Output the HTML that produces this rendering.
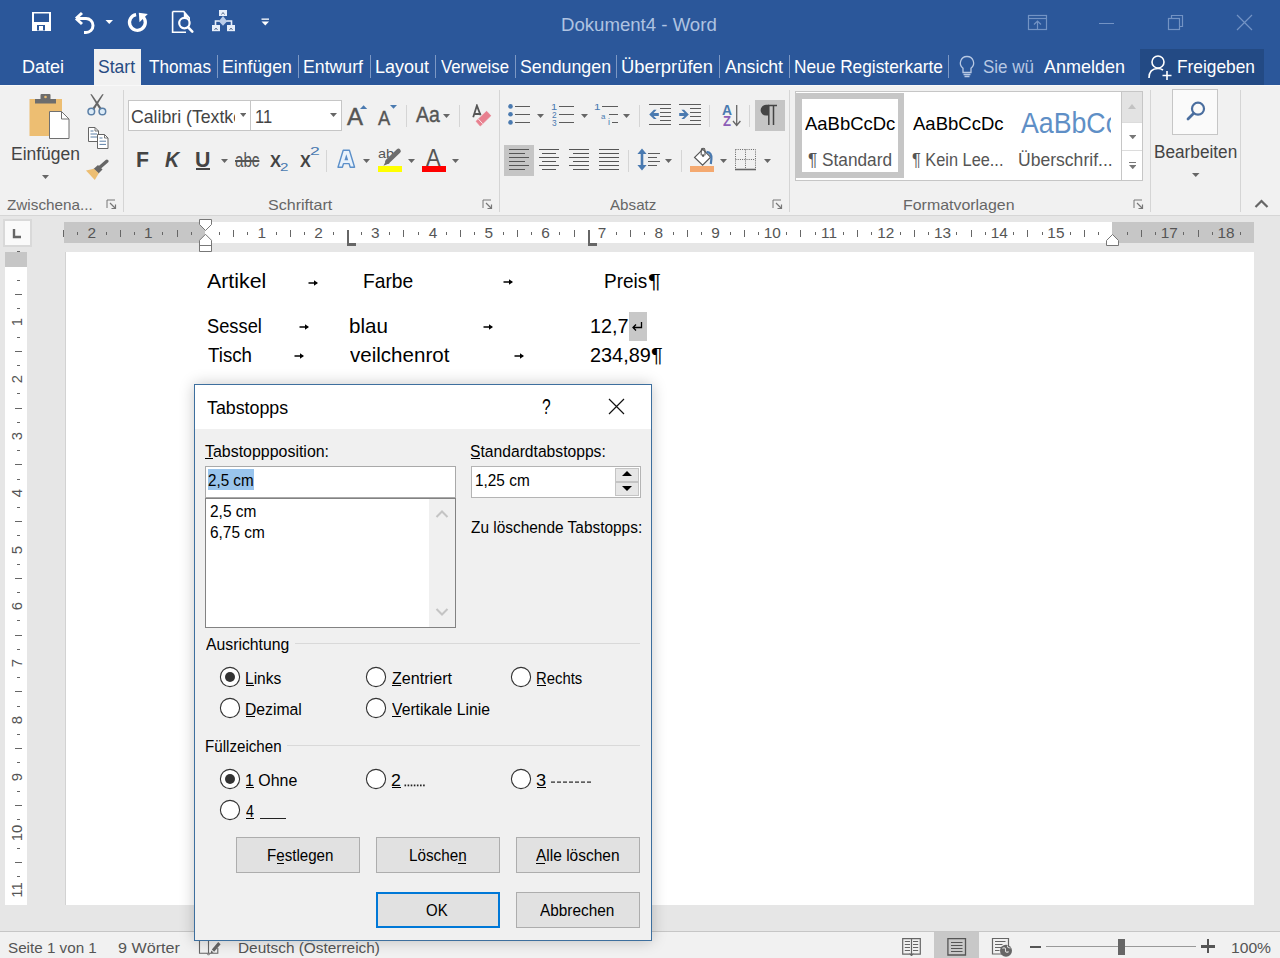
<!DOCTYPE html>
<html><head><meta charset="utf-8"><title>Word</title>
<style>
html,body{margin:0;padding:0;width:1280px;height:958px;overflow:hidden;background:#e6e6e6;}
body{position:relative;font-family:"Liberation Sans",sans-serif;}
.t{position:absolute;white-space:pre;transform-origin:0 0;font-family:"Liberation Sans",sans-serif;}
.r{position:absolute;}
</style></head><body>
<div class="r" style="left:0px;top:0px;width:1280px;height:85px;background:#2b579a;"></div>
<div class="r" style="left:0px;top:85px;width:1280px;height:131px;background:#f1f1f1;"></div>
<div class="r" style="left:0px;top:215px;width:1280px;height:1px;background:#d6d6d6;"></div>
<div class="r" style="left:0px;top:216px;width:1280px;height:715px;background:#e6e6e6;"></div>
<div class="r" style="left:0px;top:931px;width:1280px;height:1px;background:#c6c6c6;"></div>
<div class="r" style="left:0px;top:932px;width:1280px;height:26px;background:#f1f1f1;"></div>
<svg class="r" style="left:30px;top:10px;" width="24" height="24" viewBox="0 0 24 24"><path d="M2 2h19v19H2z" fill="#fff"/><rect x="4" y="3.5" width="15" height="8.5" fill="#2b579a"/><rect x="7" y="15" width="8" height="5.5" fill="#2b579a"/><rect x="9" y="16" width="4" height="4.5" fill="#fff"/></svg>
<svg class="r" style="left:72px;top:10px;" width="26" height="24" viewBox="0 0 26 24"><path d="M4 8.5 L10 3 M4 8.5 L10 14 M4 8.5 H14 A7 7 0 0 1 14 22.5 H12" fill="none" stroke="#fff" stroke-width="3"/></svg>
<svg class="r" style="left:104px;top:18px;" width="10" height="8" viewBox="0 0 10 8"><path d="M1.5 2h7.5l-3.75 4z" fill="#fff"/></svg>
<svg class="r" style="left:126px;top:10px;" width="24" height="24" viewBox="0 0 24 24"><path d="M10.1 4.6 A7.9 7.9 0 1 0 16.8 6.6" fill="none" stroke="#fff" stroke-width="3.3"/><path d="M12.8 2.8 L21.8 4 L13.5 12.2z" fill="#fff"/></svg>
<svg class="r" style="left:170px;top:9px;" width="26" height="26" viewBox="0 0 26 26"><path d="M2.6 2.5h11.2l5.4 6.2v8.5 M16 23.3H2.6V2.5" fill="none" stroke="#fff" stroke-width="1.6"/><path d="M13.8 2.5v6.2h5.4z" fill="#fff"/><circle cx="14.4" cy="14.1" r="5.2" fill="#2b579a" stroke="#fff" stroke-width="2.2"/><path d="M18.2 18.3 L22.3 22.6" stroke="#fff" stroke-width="2.6" stroke-linecap="round"/></svg>
<svg class="r" style="left:210px;top:8px;" width="28" height="26" viewBox="0 0 28 26"><rect x="9" y="2" width="8" height="6" fill="#e6eefa"/><rect x="2" y="17" width="8" height="6.2" fill="#e6eefa"/><rect x="17" y="17" width="8" height="6.2" fill="#e6eefa"/><path d="M13 8 L17.2 13.2 L13 17.8 L8.8 13.2 Z" fill="#b9cbe8"/><path d="M5.5 17 V13 H9.5 M21.5 17 V13 H16.5" stroke="#e6eefa" stroke-width="1.6" fill="none"/><path d="M11.5 6.5 L13 4.5 L14.5 6.5 M4.5 22 L6 20 L7.5 22 M19.5 22 L21 20 L22.5 22" stroke="#5a6f90" stroke-width="1" fill="none"/></svg>
<svg class="r" style="left:260px;top:17px;" width="12" height="10" viewBox="0 0 12 10"><rect x="1.5" y="1.5" width="7.5" height="1.3" fill="#fff"/><path d="M1.5 4.5h7.5l-3.75 4z" fill="#fff"/></svg>
<div class="t" style="left:560.58px;top:14.80px;font-size:19.28px;line-height:19.28px;color:#afc3e1;font-weight:normal;font-style:normal;transform:scaleX(0.9655);">Dokument4 - Word</div>
<svg class="r" style="left:1026px;top:13px;" width="24" height="19" viewBox="0 0 24 19"><rect x="2.5" y="2.5" width="18" height="14" fill="none" stroke="#7393c4" stroke-width="1.2"/><path d="M2.5 5.5h18" stroke="#7393c4" stroke-width="1.2"/><path d="M11.5 16V8 M8 11.5l3.5-3.5l3.5 3.5" fill="none" stroke="#7393c4" stroke-width="1.2"/></svg>
<div class="r" style="left:1099px;top:23px;width:15px;height:1px;background:#7393c4;"></div>
<svg class="r" style="left:1166px;top:13px;" width="20" height="19" viewBox="0 0 20 19"><rect x="2.5" y="5.5" width="11" height="11" fill="none" stroke="#7393c4" stroke-width="1.2"/><path d="M5.5 5.5V2.5h11v11h-3" fill="none" stroke="#7393c4" stroke-width="1.2"/></svg>
<svg class="r" style="left:1235px;top:13px;" width="20" height="19" viewBox="0 0 20 19"><path d="M2 2 L17 17 M17 2 L2 17" stroke="#7393c4" stroke-width="1.2"/></svg>
<div class="r" style="left:94px;top:49px;width:47px;height:36px;background:#f1f1f1;"></div>
<div class="t" style="left:22.45px;top:58.00px;font-size:18.84px;line-height:18.84px;color:#fff;font-weight:normal;font-style:normal;transform:scaleX(0.9575);">Datei</div>
<div class="t" style="left:97.97px;top:58.00px;font-size:18.84px;line-height:18.84px;color:#274b82;font-weight:normal;font-style:normal;transform:scaleX(0.9306);">Start</div>
<div class="t" style="left:148.50px;top:58.00px;font-size:18.84px;line-height:18.84px;color:#fff;font-weight:normal;font-style:normal;transform:scaleX(0.9111);">Thomas</div>
<div class="r" style="left:217px;top:55px;width:1px;height:23px;background:#7d98c4;"></div>
<div class="t" style="left:222.47px;top:58.00px;font-size:18.84px;line-height:18.84px;color:#fff;font-weight:normal;font-style:normal;transform:scaleX(0.9391);">Einfügen</div>
<div class="r" style="left:298px;top:55px;width:1px;height:23px;background:#7d98c4;"></div>
<div class="t" style="left:303.48px;top:58.00px;font-size:18.84px;line-height:18.84px;color:#fff;font-weight:normal;font-style:normal;transform:scaleX(0.9391);">Entwurf</div>
<div class="r" style="left:370px;top:55px;width:1px;height:23px;background:#7d98c4;"></div>
<div class="t" style="left:375.47px;top:58.00px;font-size:18.84px;line-height:18.84px;color:#fff;font-weight:normal;font-style:normal;transform:scaleX(0.9555);">Layout</div>
<div class="r" style="left:435px;top:55px;width:1px;height:23px;background:#7d98c4;"></div>
<div class="t" style="left:441.00px;top:58.00px;font-size:18.84px;line-height:18.84px;color:#fff;font-weight:normal;font-style:normal;transform:scaleX(0.8894);">Verweise</div>
<div class="r" style="left:515px;top:55px;width:1px;height:23px;background:#7d98c4;"></div>
<div class="t" style="left:520.47px;top:58.00px;font-size:18.84px;line-height:18.84px;color:#fff;font-weight:normal;font-style:normal;transform:scaleX(0.9449);">Sendungen</div>
<div class="r" style="left:616px;top:55px;width:1px;height:23px;background:#7d98c4;"></div>
<div class="t" style="left:621.48px;top:58.00px;font-size:18.84px;line-height:18.84px;color:#fff;font-weight:normal;font-style:normal;transform:scaleX(0.9765);">Überprüfen</div>
<div class="r" style="left:719px;top:55px;width:1px;height:23px;background:#7d98c4;"></div>
<div class="t" style="left:725.00px;top:58.00px;font-size:18.84px;line-height:18.84px;color:#fff;font-weight:normal;font-style:normal;transform:scaleX(0.9389);">Ansicht</div>
<div class="r" style="left:789px;top:55px;width:1px;height:23px;background:#7d98c4;"></div>
<div class="t" style="left:794.49px;top:58.00px;font-size:18.84px;line-height:18.84px;color:#fff;font-weight:normal;font-style:normal;transform:scaleX(0.9182);">Neue Registerkarte</div>
<div class="r" style="left:948px;top:55px;width:1px;height:23px;background:#7d98c4;"></div>
<svg class="r" style="left:956px;top:53px;" width="22" height="28" viewBox="0 0 22 28"><path d="M11 3.5 A6.5 6.5 0 0 1 15 15.2 V19.5 H7 V15.2 A6.5 6.5 0 0 1 11 3.5z" fill="none" stroke="#b7c8e3" stroke-width="1.3"/><path d="M7.5 21.5h7M8.5 23.5h5" stroke="#b7c8e3" stroke-width="1.3"/></svg>
<div class="t" style="left:982.97px;top:58.00px;font-size:18.84px;line-height:18.84px;color:#b7c8e3;font-weight:normal;font-style:normal;transform:scaleX(0.9028);">Sie wü</div>
<div class="t" style="left:1044.00px;top:58.00px;font-size:18.84px;line-height:18.84px;color:#fff;font-weight:normal;font-style:normal;transform:scaleX(0.9549);">Anmelden</div>
<div class="r" style="left:1140px;top:49px;width:124px;height:36px;background:#234a84;"></div>
<svg class="r" style="left:1146px;top:52px;" width="30" height="30" viewBox="0 0 30 30"><circle cx="12" cy="10" r="6" fill="none" stroke="#fff" stroke-width="1.6"/><path d="M3 26 C3 19 7 16.5 12 16.5 C14 16.5 15.5 17 17 18" fill="none" stroke="#fff" stroke-width="1.6"/><path d="M21 19v9M16.5 23.5h9" stroke="#fff" stroke-width="1.6"/></svg>
<div class="t" style="left:1177.48px;top:58.00px;font-size:18.84px;line-height:18.84px;color:#fff;font-weight:normal;font-style:normal;transform:scaleX(0.9197);">Freigeben</div>
<div class="r" style="left:0px;top:85px;width:1280px;height:1px;background:#f8f8f8;"></div>
<svg class="r" style="left:28px;top:93px;" width="44" height="48" viewBox="0 0 44 48"><rect x="1.5" y="6" width="32.5" height="37" fill="#edbe72"/><rect x="7" y="6" width="21" height="4.5" fill="#6d6d6d"/><rect x="12.5" y="1" width="10" height="7" rx="1" fill="#6d6d6d"/><circle cx="17.5" cy="4" r="1.3" fill="#edbe72"/><path d="M21.5 18.5h12l7.5 7.5v19.5h-19.5z" fill="#fff" stroke="#707070" stroke-width="1"/><path d="M33.5 18.5v7.5h7.5" fill="none" stroke="#707070" stroke-width="1"/></svg>
<div class="t" style="left:10.88px;top:145.60px;font-size:17.68px;line-height:17.68px;color:#444;font-weight:normal;font-style:normal;transform:scaleX(0.9890);">Einfügen</div>
<svg class="r" style="left:42px;top:175px;" width="7" height="4" viewBox="0 0 7 4"><path d="M0 0h7l-3.5 4z" fill="#666"/></svg>
<div class="t" style="left:6.50px;top:197.70px;font-size:14.78px;line-height:14.78px;color:#666666;font-weight:normal;font-style:normal;transform:scaleX(1.0343);">Zwischena...</div>
<svg class="r" style="left:106px;top:199px;" width="11" height="11" viewBox="0 0 11 11"><path d="M1 9V1h8" fill="none" stroke="#777" stroke-width="1"/><path d="M4 4l5.5 5.5M9.5 5.5v4h-4" fill="none" stroke="#777" stroke-width="1.2"/></svg>
<svg class="r" style="left:86px;top:93px;" width="22" height="24" viewBox="0 0 22 24"><path d="M4.3 1.2 L5.8 1.2 L15.6 15.2 L13.6 16.4 Z" fill="#666"/><path d="M17.7 1.2 L16.2 1.2 L6.4 15.2 L8.4 16.4 Z" fill="#666"/><circle cx="5.3" cy="18.5" r="3.3" fill="#dcebf7" stroke="#5b7fa6" stroke-width="1.5"/><circle cx="16.4" cy="18.5" r="3.3" fill="#dcebf7" stroke="#5b7fa6" stroke-width="1.5"/></svg>
<svg class="r" style="left:87px;top:126px;" width="23" height="24" viewBox="0 0 23 24"><path d="M1.5 1.5H8L11.5 5V15.5H1.5Z" fill="#fff" stroke="#666" stroke-width="1"/><path d="M8 1.5V5H11.5" fill="none" stroke="#666" stroke-width="0.9"/><path d="M3.5 5H6.5M3.5 8H10M3.5 11H10" stroke="#5b7fa6" stroke-width="1"/><path d="M10.5 8.5H17.5L21 12V22.5H10.5Z" fill="#fff" stroke="#666" stroke-width="1"/><path d="M17.5 8.5V12H21" fill="none" stroke="#666" stroke-width="0.9"/><path d="M12.5 12H15.5M12.5 15.2H19M12.5 18.4H19" stroke="#5b7fa6" stroke-width="1"/></svg>
<svg class="r" style="left:84px;top:159px;" width="27" height="24" viewBox="0 0 27 24"><path d="M14.5 9.5 L22.8 2.2" stroke="#666" stroke-width="3.4" stroke-linecap="round"/><path d="M9.5 10 L14 6 L18.5 10.5 L14.5 14.5 Z" fill="#666"/><path d="M2 11.5 L10 9.8 L14.8 14.3 L10.8 21 Z" fill="#edbe72"/></svg>
<div class="r" style="left:123px;top:90px;width:1px;height:122px;background:#d5d5d5;"></div>
<div class="r" style="left:128px;top:100px;width:123px;height:31px;background:#fff;box-sizing:border-box;border:1px solid #c6c6c6;"></div>
<div class="r" style="left:251px;top:100px;width:91px;height:31px;background:#fff;box-sizing:border-box;border:1px solid #c6c6c6;border-left:none;"></div>
<div class="r" style="left:129px;top:101px;width:106px;height:29px;overflow:hidden">
<div class="t" style="left:1.68px;top:7.00px;font-size:18.84px;line-height:18.84px;color:#444;font-weight:normal;font-style:normal;transform:scaleX(0.9390);">Calibri (Textkörper)</div>
</div>
<svg class="r" style="left:239.5px;top:113px;" width="6.5" height="4" viewBox="0 0 6.5 4"><path d="M0 0h6.5l-3.25 4z" fill="#666"/></svg>
<div class="t" style="left:254.89px;top:108.00px;font-size:18.26px;line-height:18.26px;color:#444;font-weight:normal;font-style:normal;transform:scaleX(0.9054);">11</div>
<svg class="r" style="left:330px;top:113px;" width="7" height="4" viewBox="0 0 7 4"><path d="M0 0h7l-3.5 4z" fill="#666"/></svg>
<div class="t" style="left:347.40px;top:105.00px;font-size:24.64px;line-height:24.64px;color:#555;font-weight:normal;font-style:normal;transform:scaleX(0.9746);-webkit-text-stroke:0.45px #555;">A</div>
<svg class="r" style="left:360px;top:105px;" width="8" height="4" viewBox="0 0 8 4"><path d="M0 4h7.2l-3.6-3.8z" fill="#4a7ab0"/></svg>
<div class="t" style="left:377.70px;top:108.00px;font-size:20.29px;line-height:20.29px;color:#555;font-weight:normal;font-style:normal;transform:scaleX(0.9024);-webkit-text-stroke:0.4px #555;">A</div>
<svg class="r" style="left:390px;top:105px;" width="8" height="4" viewBox="0 0 8 4"><path d="M0 0h7l-3.5 3.8z" fill="#4a7ab0"/></svg>
<div class="r" style="left:406px;top:105px;width:1px;height:22px;background:#d5d5d5;"></div>
<div class="t" style="left:415.60px;top:103.80px;font-size:21.16px;line-height:21.16px;color:#555;font-weight:normal;font-style:normal;transform:scaleX(0.9190);-webkit-text-stroke:0.4px #555;">Aa</div>
<svg class="r" style="left:443px;top:114px;" width="7" height="4" viewBox="0 0 7 4"><path d="M0 0h7l-3.5 4z" fill="#666"/></svg>
<div class="r" style="left:459px;top:105px;width:1px;height:22px;background:#d5d5d5;"></div>
<svg class="r" style="left:470px;top:104px;" width="24" height="24" viewBox="0 0 24 24"><path d="M3.2 13.3 L6.9 1.6 L10.6 11.2 M4.5 10 H11" fill="none" stroke="#555" stroke-width="1.8"/><path d="M16.6 7.3 L20.8 11.7 L10.3 22 L6.1 17.3 Z" fill="#e8808f" stroke="#e8808f" stroke-width="0.8" stroke-linejoin="round"/><path d="M8.4 15.1 L12.6 19.7" stroke="#fbe3e7" stroke-width="1"/></svg>
<div class="t" style="left:136.00px;top:149.00px;font-size:22.61px;line-height:22.61px;color:#444;font-weight:bold;font-style:normal;transform:scaleX(0.9382);">F</div>
<div class="t" style="left:165.30px;top:149.00px;font-size:22.61px;line-height:22.61px;color:#444;font-weight:bold;font-style:italic;transform:scaleX(0.8719);">K</div>
<div class="t" style="left:194.67px;top:149.00px;font-size:22.61px;line-height:22.61px;color:#444;font-weight:bold;font-style:normal;transform:scaleX(0.9442);">U</div>
<div class="r" style="left:196px;top:168px;width:13.5px;height:1.5px;background:#444;"></div>
<svg class="r" style="left:221px;top:159px;" width="7" height="4" viewBox="0 0 7 4"><path d="M0 0h7l-3.5 4z" fill="#666"/></svg>
<div class="t" style="left:234.80px;top:149.60px;font-size:20.00px;line-height:20.00px;color:#555;font-weight:normal;font-style:normal;transform:scaleX(0.7569);text-decoration:line-through;">abc</div>
<div class="t" style="left:270.00px;top:154.00px;font-size:16.96px;line-height:16.96px;color:#444;font-weight:bold;font-style:normal;transform:scaleX(0.9726);">X</div>
<div class="t" style="left:280.20px;top:163.00px;font-size:10.14px;line-height:10.14px;color:#4a7ab0;font-weight:normal;font-style:normal;transform:scaleX(1.4981);">2</div>
<div class="t" style="left:299.70px;top:154.00px;font-size:16.96px;line-height:16.96px;color:#444;font-weight:bold;font-style:normal;transform:scaleX(0.9550);">X</div>
<div class="t" style="left:309.60px;top:147.00px;font-size:10.14px;line-height:10.14px;color:#4a7ab0;font-weight:normal;font-style:normal;transform:scaleX(1.7374);">2</div>
<div class="r" style="left:326px;top:150px;width:1px;height:22px;background:#d5d5d5;"></div>
<svg class="r" style="left:336px;top:148px;" width="21" height="22" viewBox="0 0 21 22"><path d="M7.2 2.3 H13.4 L18.6 19.2 H14.2 L13.1 15.6 H7.5 L6.4 19.2 H2 Z" fill="#e9f2fb" stroke="#5b8fc9" stroke-width="1.4" stroke-linejoin="round"/><path d="M8.4 12.3 H12.2 L10.3 6.2 Z" fill="#5a8cc6"/></svg>
<svg class="r" style="left:363px;top:159px;" width="7" height="4" viewBox="0 0 7 4"><path d="M0 0h7l-3.5 4z" fill="#666"/></svg>
<div class="t" style="left:377.68px;top:146.60px;font-size:13.62px;line-height:13.62px;color:#555;font-weight:normal;font-style:normal;transform:scaleX(1.0609);">ab</div>
<svg class="r" style="left:380px;top:147px;" width="24" height="22" viewBox="0 0 24 22"><path d="M7.5 14.5 L18.5 4" stroke="#6d6d6d" stroke-width="4.6" stroke-linecap="round"/><path d="M3.5 18.8 L6.2 13.2 L9.5 16.2 Z" fill="#6d6d6d"/></svg>
<div class="r" style="left:378px;top:166px;width:24px;height:6px;background:#ffff00;"></div>
<svg class="r" style="left:408px;top:159px;" width="7" height="4" viewBox="0 0 7 4"><path d="M0 0h7l-3.5 4z" fill="#666"/></svg>
<div class="t" style="left:426.20px;top:147.30px;font-size:23.62px;line-height:23.62px;color:#555;font-weight:normal;font-style:normal;transform:scaleX(0.9268);">A</div>
<div class="r" style="left:422px;top:166px;width:24px;height:6px;background:#ff0000;"></div>
<svg class="r" style="left:452px;top:159px;" width="7" height="4" viewBox="0 0 7 4"><path d="M0 0h7l-3.5 4z" fill="#666"/></svg>
<div class="t" style="left:267.73px;top:197.70px;font-size:14.78px;line-height:14.78px;color:#666666;font-weight:normal;font-style:normal;transform:scaleX(1.0875);">Schriftart</div>
<svg class="r" style="left:482px;top:199px;" width="11" height="11" viewBox="0 0 11 11"><path d="M1 9V1h8" fill="none" stroke="#777" stroke-width="1"/><path d="M4 4l5.5 5.5M9.5 5.5v4h-4" fill="none" stroke="#777" stroke-width="1.2"/></svg>
<div class="r" style="left:499px;top:90px;width:1px;height:122px;background:#d5d5d5;"></div>
<svg class="r" style="left:507px;top:103px;" width="7" height="7" viewBox="0 0 7 7"><circle cx="3.5" cy="3.4" r="2.3" fill="#4a7ab0"/></svg>
<div class="r" style="left:515px;top:106px;width:15px;height:1px;background:#5c5c5c;"></div>
<svg class="r" style="left:507px;top:111px;" width="7" height="7" viewBox="0 0 7 7"><circle cx="3.5" cy="3.3" r="2.3" fill="#4a7ab0"/></svg>
<div class="r" style="left:515px;top:114px;width:15px;height:1px;background:#5c5c5c;"></div>
<svg class="r" style="left:507px;top:119px;" width="7" height="7" viewBox="0 0 7 7"><circle cx="3.5" cy="3.4" r="2.3" fill="#4a7ab0"/></svg>
<div class="r" style="left:515px;top:122px;width:15px;height:1px;background:#5c5c5c;"></div>
<svg class="r" style="left:537px;top:114px;" width="7" height="4" viewBox="0 0 7 4"><path d="M0 0h7l-3.5 4z" fill="#666"/></svg>
<div class="t" style="left:550.57px;top:102.60px;font-size:8.99px;line-height:8.99px;color:#4a7ab0;font-weight:normal;font-style:normal;transform:scaleX(1.2337);">1</div>
<div class="r" style="left:559px;top:106px;width:15px;height:1px;background:#5c5c5c;"></div>
<div class="t" style="left:552.00px;top:110.50px;font-size:8.99px;line-height:8.99px;color:#4a7ab0;font-weight:normal;font-style:normal;transform:scaleX(0.9253);">2</div>
<div class="r" style="left:559px;top:114px;width:15px;height:1px;background:#5c5c5c;"></div>
<div class="t" style="left:552.00px;top:118.60px;font-size:8.99px;line-height:8.99px;color:#4a7ab0;font-weight:normal;font-style:normal;transform:scaleX(0.9253);">3</div>
<div class="r" style="left:559px;top:122px;width:15px;height:1px;background:#5c5c5c;"></div>
<svg class="r" style="left:581px;top:114px;" width="7" height="4" viewBox="0 0 7 4"><path d="M0 0h7l-3.5 4z" fill="#666"/></svg>
<div class="t" style="left:593.60px;top:102.60px;font-size:8.70px;line-height:8.70px;color:#4a7ab0;font-weight:normal;font-style:normal;transform:scaleX(1.3403);">1</div>
<div class="t" style="left:600.80px;top:114.30px;font-size:6.96px;line-height:6.96px;color:#4a7ab0;font-weight:normal;font-style:normal;transform:scaleX(1.1381);">a</div>
<div class="t" style="left:607.60px;top:118.30px;font-size:8.70px;line-height:8.70px;color:#4a7ab0;font-weight:normal;font-style:normal;transform:scaleX(1.0153);">i</div>
<div class="r" style="left:602px;top:106px;width:16px;height:1px;background:#5c5c5c;"></div>
<div class="r" style="left:608.5px;top:114px;width:9.5px;height:1px;background:#5c5c5c;"></div>
<div class="r" style="left:612px;top:122px;width:6px;height:1px;background:#5c5c5c;"></div>
<svg class="r" style="left:623.2px;top:114px;" width="7" height="4" viewBox="0 0 7 4"><path d="M0 0h7l-3.5 4z" fill="#666"/></svg>
<div class="r" style="left:639px;top:105px;width:1px;height:22px;background:#d5d5d5;"></div>
<div class="r" style="left:648.6px;top:104px;width:22.4px;height:1px;background:#5c5c5c;"></div>
<div class="r" style="left:648.6px;top:124px;width:22.4px;height:1px;background:#5c5c5c;"></div>
<div class="r" style="left:660.1px;top:108px;width:11px;height:1px;background:#5c5c5c;"></div>
<div class="r" style="left:660.1px;top:112px;width:11px;height:1px;background:#5c5c5c;"></div>
<div class="r" style="left:660.1px;top:116px;width:11px;height:1px;background:#5c5c5c;"></div>
<div class="r" style="left:660.1px;top:120px;width:11px;height:1px;background:#5c5c5c;"></div>
<svg class="r" style="left:648.6px;top:109px;" width="11" height="11" viewBox="0 0 11 11"><path d="M0.2 5.4 L4.9 0.7 H7.6 L4.6 3.9 H9.8 V6.9 H4.6 L7.6 10.1 H4.9 Z" fill="#4a7ab0"/></svg>
<div class="r" style="left:678.7px;top:104px;width:22.4px;height:1px;background:#5c5c5c;"></div>
<div class="r" style="left:678.7px;top:124px;width:22.4px;height:1px;background:#5c5c5c;"></div>
<div class="r" style="left:690.2px;top:108px;width:11px;height:1px;background:#5c5c5c;"></div>
<div class="r" style="left:690.2px;top:112px;width:11px;height:1px;background:#5c5c5c;"></div>
<div class="r" style="left:690.2px;top:116px;width:11px;height:1px;background:#5c5c5c;"></div>
<div class="r" style="left:690.2px;top:120px;width:11px;height:1px;background:#5c5c5c;"></div>
<svg class="r" style="left:678.7px;top:109px;" width="11" height="11" viewBox="0 0 11 11"><path d="M9.8 5.4 L5.1 0.7 H2.4 L5.4 3.9 H0.2 V6.9 H5.4 L2.4 10.1 H5.1 Z" fill="#4a7ab0"/></svg>
<div class="r" style="left:709px;top:105px;width:1px;height:22px;background:#d5d5d5;"></div>
<div class="t" style="left:721.80px;top:101.60px;font-size:15.36px;line-height:15.36px;color:#4a7ab0;font-weight:bold;font-style:normal;transform:scaleX(0.9041);">A</div>
<div class="t" style="left:722.50px;top:113.70px;font-size:14.06px;line-height:14.06px;color:#8d5eb7;font-weight:bold;font-style:normal;transform:scaleX(0.9314);">Z</div>
<svg class="r" style="left:731px;top:103px;" width="12" height="24" viewBox="0 0 12 24"><path d="M5.7 2v21 M2 18 L5.7 22.5 L9.4 18" fill="none" stroke="#666" stroke-width="1.3"/></svg>
<div class="r" style="left:749px;top:105px;width:1px;height:22px;background:#d5d5d5;"></div>
<div class="r" style="left:755px;top:100px;width:30px;height:31px;background:#c5c5c5;"></div>
<svg class="r" style="left:758px;top:103px;" width="22" height="24" viewBox="0 0 22 24"><path d="M10 2.5 H19 M10.8 2.5 V22 M15.5 2.5 V22" fill="none" stroke="#444" stroke-width="1.5"/><path d="M10.8 1.8 H8 A5.4 5.4 0 0 0 8 12.6 H10.8 Z" fill="#444"/></svg>
<div class="r" style="left:504px;top:145px;width:30px;height:31px;background:#c5c5c5;"></div>
<div class="r" style="left:509px;top:149px;width:20px;height:1px;background:#555;"></div>
<div class="r" style="left:509px;top:153px;width:16px;height:1px;background:#555;"></div>
<div class="r" style="left:509px;top:157px;width:20px;height:1px;background:#555;"></div>
<div class="r" style="left:509px;top:161px;width:16px;height:1px;background:#555;"></div>
<div class="r" style="left:509px;top:165px;width:20px;height:1px;background:#555;"></div>
<div class="r" style="left:509px;top:169px;width:16px;height:1px;background:#555;"></div>
<div class="r" style="left:539px;top:149px;width:20px;height:1px;background:#555;"></div>
<div class="r" style="left:542px;top:153px;width:14px;height:1px;background:#555;"></div>
<div class="r" style="left:539px;top:157px;width:20px;height:1px;background:#555;"></div>
<div class="r" style="left:542px;top:161px;width:14px;height:1px;background:#555;"></div>
<div class="r" style="left:539px;top:165px;width:20px;height:1px;background:#555;"></div>
<div class="r" style="left:542px;top:169px;width:14px;height:1px;background:#555;"></div>
<div class="r" style="left:569px;top:149px;width:20px;height:1px;background:#555;"></div>
<div class="r" style="left:573px;top:153px;width:16px;height:1px;background:#555;"></div>
<div class="r" style="left:569px;top:157px;width:20px;height:1px;background:#555;"></div>
<div class="r" style="left:573px;top:161px;width:16px;height:1px;background:#555;"></div>
<div class="r" style="left:569px;top:165px;width:20px;height:1px;background:#555;"></div>
<div class="r" style="left:573px;top:169px;width:16px;height:1px;background:#555;"></div>
<div class="r" style="left:599px;top:149px;width:20px;height:1px;background:#555;"></div>
<div class="r" style="left:599px;top:153px;width:20px;height:1px;background:#555;"></div>
<div class="r" style="left:599px;top:157px;width:20px;height:1px;background:#555;"></div>
<div class="r" style="left:599px;top:161px;width:20px;height:1px;background:#555;"></div>
<div class="r" style="left:599px;top:165px;width:20px;height:1px;background:#555;"></div>
<div class="r" style="left:599px;top:169px;width:20px;height:1px;background:#555;"></div>
<div class="r" style="left:628px;top:150px;width:1px;height:22px;background:#d5d5d5;"></div>
<svg class="r" style="left:636px;top:147px;" width="12" height="25" viewBox="0 0 12 25"><path d="M6 1.4 L10.6 7 H1.4 Z M6 23.6 L10.6 18 H1.4 Z" fill="#4a7ab0"/><path d="M6 6v13" stroke="#4a7ab0" stroke-width="2.6"/></svg>
<div class="r" style="left:648px;top:153px;width:12px;height:1px;background:#5c5c5c;"></div>
<div class="r" style="left:648px;top:157px;width:9px;height:1px;background:#5c5c5c;"></div>
<div class="r" style="left:648px;top:161px;width:12px;height:1px;background:#5c5c5c;"></div>
<div class="r" style="left:648px;top:165px;width:9px;height:1px;background:#5c5c5c;"></div>
<svg class="r" style="left:665px;top:159px;" width="7" height="4" viewBox="0 0 7 4"><path d="M0 0h7l-3.5 4z" fill="#666"/></svg>
<div class="r" style="left:681px;top:150px;width:1px;height:22px;background:#d5d5d5;"></div>
<svg class="r" style="left:692px;top:146px;" width="22" height="22" viewBox="0 0 22 22"><path d="M2.6 11.4 L10.8 3.4 L18.6 11.2 L10.6 19.2 Z" fill="#fff" stroke="#555" stroke-width="1.2"/><path d="M9.2 9.2 V4.2 A1.9 1.9 0 0 1 13 4.2 V9.2" fill="none" stroke="#555" stroke-width="1.1"/><circle cx="11.1" cy="9.6" r="1.3" fill="#555"/><path d="M14.5 5.8 C17.5 6.2 19.8 8.6 19.4 13 L18.8 18" fill="none" stroke="#4a7ab0" stroke-width="2.2"/></svg>
<div class="r" style="left:690px;top:166px;width:24px;height:6px;background:#f4a970;"></div>
<svg class="r" style="left:720px;top:159px;" width="7" height="4" viewBox="0 0 7 4"><path d="M0 0h7l-3.5 4z" fill="#666"/></svg>
<svg class="r" style="left:734px;top:148px;" width="24" height="23" viewBox="0 0 24 23"><path d="M1.5 1.5H21.5V21.5 M1.5 1.5V21.5 M11.5 1.5V21.5 M1.5 11.5H21.5" fill="none" stroke="#666" stroke-width="1" stroke-dasharray="1 1.2"/><path d="M1 21.5h21" stroke="#666" stroke-width="1.6"/></svg>
<svg class="r" style="left:764px;top:159px;" width="7" height="4" viewBox="0 0 7 4"><path d="M0 0h7l-3.5 4z" fill="#666"/></svg>
<div class="t" style="left:610.30px;top:197.70px;font-size:14.78px;line-height:14.78px;color:#666666;font-weight:normal;font-style:normal;transform:scaleX(1.0268);">Absatz</div>
<svg class="r" style="left:772px;top:199px;" width="11" height="11" viewBox="0 0 11 11"><path d="M1 9V1h8" fill="none" stroke="#777" stroke-width="1"/><path d="M4 4l5.5 5.5M9.5 5.5v4h-4" fill="none" stroke="#777" stroke-width="1.2"/></svg>
<div class="r" style="left:789px;top:90px;width:1px;height:122px;background:#d5d5d5;"></div>
<div class="r" style="left:795px;top:91px;width:348px;height:90px;background:#fff;box-sizing:border-box;border:1px solid #c6c6c6;"></div>
<div class="r" style="left:796px;top:93px;width:108px;height:85px;background:#c6c6c6;"></div>
<div class="r" style="left:802px;top:99px;width:96px;height:73px;background:#fff;"></div>
<div class="t" style="left:805.00px;top:113.50px;font-size:19.28px;line-height:19.28px;color:#000;font-weight:normal;font-style:normal;transform:scaleX(0.9589);">AaBbCcDc</div>
<div class="t" style="left:807.98px;top:150.70px;font-size:18.70px;line-height:18.70px;color:#555;font-weight:normal;font-style:normal;transform:scaleX(0.9224);">¶ Standard</div>
<div class="t" style="left:912.70px;top:113.50px;font-size:19.28px;line-height:19.28px;color:#000;font-weight:normal;font-style:normal;transform:scaleX(0.9610);">AaBbCcDc</div>
<div class="t" style="left:912.27px;top:150.70px;font-size:18.70px;line-height:18.70px;color:#555;font-weight:normal;font-style:normal;transform:scaleX(0.8742);">¶ Kein Lee...</div>
<div class="r" style="left:1015px;top:100px;width:96px;height:40px;overflow:hidden">
<div class="t" style="left:6.00px;top:8.50px;font-size:28.99px;line-height:28.99px;color:#5f8fc6;font-weight:normal;font-style:normal;transform:scaleX(0.9218);">AaBbCc</div>
</div>
<div class="t" style="left:1018.47px;top:150.70px;font-size:18.70px;line-height:18.70px;color:#555;font-weight:normal;font-style:normal;transform:scaleX(0.9396);">Überschrif...</div>
<div class="r" style="left:1121px;top:91px;width:1px;height:90px;background:#c6c6c6;"></div>
<div class="r" style="left:1122px;top:92px;width:20px;height:30px;background:#e3e3e3;"></div>
<div class="r" style="left:1122px;top:122px;width:20px;height:1px;background:#dcdcdc;"></div>
<div class="r" style="left:1122px;top:150px;width:20px;height:1px;background:#dcdcdc;"></div>
<svg class="r" style="left:1128px;top:104px;" width="9" height="6" viewBox="0 0 9 6"><path d="M0 5h8l-4-5z" fill="#c2c2c2"/></svg>
<svg class="r" style="left:1128.5px;top:134.5px;" width="7.5" height="4.2" viewBox="0 0 7.5 4.2"><path d="M0 0h7.5l-3.75 4.2z" fill="#777"/></svg>
<div class="r" style="left:1128.5px;top:161.5px;width:7.5px;height:1.2px;background:#777;"></div>
<svg class="r" style="left:1128.5px;top:165px;" width="7.5" height="4.2" viewBox="0 0 7.5 4.2"><path d="M0 0h7.5l-3.75 4.2z" fill="#777"/></svg>
<div class="t" style="left:902.98px;top:197.70px;font-size:14.78px;line-height:14.78px;color:#666666;font-weight:normal;font-style:normal;transform:scaleX(1.0785);">Formatvorlagen</div>
<svg class="r" style="left:1133px;top:199px;" width="11" height="11" viewBox="0 0 11 11"><path d="M1 9V1h8" fill="none" stroke="#777" stroke-width="1"/><path d="M4 4l5.5 5.5M9.5 5.5v4h-4" fill="none" stroke="#777" stroke-width="1.2"/></svg>
<div class="r" style="left:1150px;top:90px;width:1px;height:122px;background:#d5d5d5;"></div>
<div class="r" style="left:1172px;top:89px;width:46px;height:46px;background:#fafafa;box-sizing:border-box;border:1px solid #c6c6c6;"></div>
<svg class="r" style="left:1184px;top:99px;" width="24" height="24" viewBox="0 0 24 24"><circle cx="14" cy="9.7" r="6" fill="none" stroke="#4a6e9f" stroke-width="2.2"/><path d="M9.5 14.5 L4 20" stroke="#4a6e9f" stroke-width="2.8" stroke-linecap="round"/></svg>
<div class="t" style="left:1153.98px;top:143.00px;font-size:18.70px;line-height:18.70px;color:#444;font-weight:normal;font-style:normal;transform:scaleX(0.9204);">Bearbeiten</div>
<svg class="r" style="left:1192px;top:173px;" width="7.5" height="4" viewBox="0 0 7.5 4"><path d="M0 0h7.5l-3.75 4z" fill="#666"/></svg>
<div class="r" style="left:1240px;top:90px;width:1px;height:122px;background:#d5d5d5;"></div>
<svg class="r" style="left:1253px;top:197px;" width="17" height="13" viewBox="0 0 17 13"><path d="M2.5 10 L8.5 4 L14.5 10" fill="none" stroke="#666" stroke-width="2.2"/></svg>
<div class="r" style="left:3px;top:219px;width:29px;height:28px;background:#d9d9d9;"></div>
<div class="r" style="left:5px;top:221px;width:25px;height:24px;background:#fafafa;"></div>
<svg class="r" style="left:10px;top:226px;" width="14" height="14" viewBox="0 0 14 14"><path d="M4 3v8h7" fill="none" stroke="#666" stroke-width="2.4"/></svg>
<div class="r" style="left:64px;top:222px;width:1190px;height:21px;background:#c6c6c6;"></div>
<div class="r" style="left:205px;top:222px;width:907px;height:21px;background:#fff;"></div>
<div class="r" style="left:63px;top:230px;width:1px;height:7px;background:#666;"></div>
<div class="r" style="left:77px;top:232px;width:1px;height:3px;background:#666;"></div>
<div class="t" style="left:87.39px;top:225.40px;font-size:15.36px;line-height:15.36px;color:#555;font-weight:normal;font-style:normal;">2</div>
<div class="r" style="left:106px;top:232px;width:1px;height:3px;background:#666;"></div>
<div class="r" style="left:120px;top:230px;width:1px;height:7px;background:#666;"></div>
<div class="r" style="left:134px;top:232px;width:1px;height:3px;background:#666;"></div>
<div class="t" style="left:144.11px;top:225.40px;font-size:15.36px;line-height:15.36px;color:#555;font-weight:normal;font-style:normal;">1</div>
<div class="r" style="left:162px;top:232px;width:1px;height:3px;background:#666;"></div>
<div class="r" style="left:177px;top:230px;width:1px;height:7px;background:#666;"></div>
<div class="r" style="left:191px;top:232px;width:1px;height:3px;background:#666;"></div>
<div class="r" style="left:219px;top:232px;width:1px;height:3px;background:#666;"></div>
<div class="r" style="left:233px;top:230px;width:1px;height:7px;background:#666;"></div>
<div class="r" style="left:247px;top:232px;width:1px;height:3px;background:#666;"></div>
<div class="t" style="left:257.55px;top:225.40px;font-size:15.36px;line-height:15.36px;color:#555;font-weight:normal;font-style:normal;">1</div>
<div class="r" style="left:276px;top:232px;width:1px;height:3px;background:#666;"></div>
<div class="r" style="left:290px;top:230px;width:1px;height:7px;background:#666;"></div>
<div class="r" style="left:304px;top:232px;width:1px;height:3px;background:#666;"></div>
<div class="t" style="left:314.27px;top:225.40px;font-size:15.36px;line-height:15.36px;color:#555;font-weight:normal;font-style:normal;">2</div>
<div class="r" style="left:333px;top:232px;width:1px;height:3px;background:#666;"></div>
<div class="r" style="left:347px;top:230px;width:1px;height:7px;background:#666;"></div>
<div class="r" style="left:361px;top:232px;width:1px;height:3px;background:#666;"></div>
<div class="t" style="left:370.99px;top:225.40px;font-size:15.36px;line-height:15.36px;color:#555;font-weight:normal;font-style:normal;">3</div>
<div class="r" style="left:389px;top:232px;width:1px;height:3px;background:#666;"></div>
<div class="r" style="left:403px;top:230px;width:1px;height:7px;background:#666;"></div>
<div class="r" style="left:418px;top:232px;width:1px;height:3px;background:#666;"></div>
<div class="t" style="left:428.71px;top:225.40px;font-size:15.36px;line-height:15.36px;color:#555;font-weight:normal;font-style:normal;">4</div>
<div class="r" style="left:446px;top:232px;width:1px;height:3px;background:#666;"></div>
<div class="r" style="left:460px;top:230px;width:1px;height:7px;background:#666;"></div>
<div class="r" style="left:474px;top:232px;width:1px;height:3px;background:#666;"></div>
<div class="t" style="left:484.43px;top:225.40px;font-size:15.36px;line-height:15.36px;color:#555;font-weight:normal;font-style:normal;">5</div>
<div class="r" style="left:503px;top:232px;width:1px;height:3px;background:#666;"></div>
<div class="r" style="left:517px;top:230px;width:1px;height:7px;background:#666;"></div>
<div class="r" style="left:531px;top:232px;width:1px;height:3px;background:#666;"></div>
<div class="t" style="left:541.15px;top:225.40px;font-size:15.36px;line-height:15.36px;color:#555;font-weight:normal;font-style:normal;">6</div>
<div class="r" style="left:559px;top:232px;width:1px;height:3px;background:#666;"></div>
<div class="r" style="left:574px;top:230px;width:1px;height:7px;background:#666;"></div>
<div class="r" style="left:588px;top:232px;width:1px;height:3px;background:#666;"></div>
<div class="t" style="left:597.87px;top:225.40px;font-size:15.36px;line-height:15.36px;color:#555;font-weight:normal;font-style:normal;">7</div>
<div class="r" style="left:616px;top:232px;width:1px;height:3px;background:#666;"></div>
<div class="r" style="left:630px;top:230px;width:1px;height:7px;background:#666;"></div>
<div class="r" style="left:644px;top:232px;width:1px;height:3px;background:#666;"></div>
<div class="t" style="left:654.59px;top:225.40px;font-size:15.36px;line-height:15.36px;color:#555;font-weight:normal;font-style:normal;">8</div>
<div class="r" style="left:673px;top:232px;width:1px;height:3px;background:#666;"></div>
<div class="r" style="left:687px;top:230px;width:1px;height:7px;background:#666;"></div>
<div class="r" style="left:701px;top:232px;width:1px;height:3px;background:#666;"></div>
<div class="t" style="left:711.31px;top:225.40px;font-size:15.36px;line-height:15.36px;color:#555;font-weight:normal;font-style:normal;">9</div>
<div class="r" style="left:730px;top:232px;width:1px;height:3px;background:#666;"></div>
<div class="r" style="left:744px;top:230px;width:1px;height:7px;background:#666;"></div>
<div class="r" style="left:758px;top:232px;width:1px;height:3px;background:#666;"></div>
<div class="t" style="left:763.76px;top:225.40px;font-size:15.36px;line-height:15.36px;color:#555;font-weight:normal;font-style:normal;">10</div>
<div class="r" style="left:786px;top:232px;width:1px;height:3px;background:#666;"></div>
<div class="r" style="left:800px;top:230px;width:1px;height:7px;background:#666;"></div>
<div class="r" style="left:815px;top:232px;width:1px;height:3px;background:#666;"></div>
<div class="t" style="left:821.05px;top:225.40px;font-size:15.36px;line-height:15.36px;color:#555;font-weight:normal;font-style:normal;">11</div>
<div class="r" style="left:843px;top:232px;width:1px;height:3px;background:#666;"></div>
<div class="r" style="left:857px;top:230px;width:1px;height:7px;background:#666;"></div>
<div class="r" style="left:871px;top:232px;width:1px;height:3px;background:#666;"></div>
<div class="t" style="left:877.20px;top:225.40px;font-size:15.36px;line-height:15.36px;color:#555;font-weight:normal;font-style:normal;">12</div>
<div class="r" style="left:900px;top:232px;width:1px;height:3px;background:#666;"></div>
<div class="r" style="left:914px;top:230px;width:1px;height:7px;background:#666;"></div>
<div class="r" style="left:928px;top:232px;width:1px;height:3px;background:#666;"></div>
<div class="t" style="left:933.92px;top:225.40px;font-size:15.36px;line-height:15.36px;color:#555;font-weight:normal;font-style:normal;">13</div>
<div class="r" style="left:956px;top:232px;width:1px;height:3px;background:#666;"></div>
<div class="r" style="left:971px;top:230px;width:1px;height:7px;background:#666;"></div>
<div class="r" style="left:985px;top:232px;width:1px;height:3px;background:#666;"></div>
<div class="t" style="left:990.64px;top:225.40px;font-size:15.36px;line-height:15.36px;color:#555;font-weight:normal;font-style:normal;">14</div>
<div class="r" style="left:1013px;top:232px;width:1px;height:3px;background:#666;"></div>
<div class="r" style="left:1027px;top:230px;width:1px;height:7px;background:#666;"></div>
<div class="r" style="left:1042px;top:232px;width:1px;height:3px;background:#666;"></div>
<div class="t" style="left:1047.36px;top:225.40px;font-size:15.36px;line-height:15.36px;color:#555;font-weight:normal;font-style:normal;">15</div>
<div class="r" style="left:1070px;top:232px;width:1px;height:3px;background:#666;"></div>
<div class="r" style="left:1084px;top:230px;width:1px;height:7px;background:#666;"></div>
<div class="r" style="left:1098px;top:232px;width:1px;height:3px;background:#666;"></div>
<div class="r" style="left:1127px;top:232px;width:1px;height:3px;background:#666;"></div>
<div class="r" style="left:1141px;top:230px;width:1px;height:7px;background:#666;"></div>
<div class="r" style="left:1155px;top:232px;width:1px;height:3px;background:#666;"></div>
<div class="t" style="left:1160.80px;top:225.40px;font-size:15.36px;line-height:15.36px;color:#555;font-weight:normal;font-style:normal;">17</div>
<div class="r" style="left:1183px;top:232px;width:1px;height:3px;background:#666;"></div>
<div class="r" style="left:1198px;top:230px;width:1px;height:7px;background:#666;"></div>
<div class="r" style="left:1212px;top:232px;width:1px;height:3px;background:#666;"></div>
<div class="t" style="left:1217.52px;top:225.40px;font-size:15.36px;line-height:15.36px;color:#555;font-weight:normal;font-style:normal;">18</div>
<div class="r" style="left:1240px;top:232px;width:1px;height:3px;background:#666;"></div>
<div class="r" style="left:346.5px;top:230px;width:2px;height:15px;background:#666;"></div>
<div class="r" style="left:346.5px;top:243px;width:9px;height:2.5px;background:#666;"></div>
<div class="r" style="left:587.5px;top:230px;width:2px;height:15px;background:#666;"></div>
<div class="r" style="left:587.5px;top:243px;width:9px;height:2.5px;background:#666;"></div>
<svg class="r" style="left:198px;top:218px;" width="15" height="35" viewBox="0 0 15 35"><path d="M1.5 1.5H13.5V6.5L7.5 12.5L1.5 6.5Z" fill="#fff" stroke="#777" stroke-width="1"/><path d="M7.5 16.3L13.5 22.3V33.5H1.5V22.3Z" fill="#fff" stroke="#777" stroke-width="1"/><path d="M1.5 27.5H13.5" stroke="#777" stroke-width="1"/></svg>
<svg class="r" style="left:1105px;top:233px;" width="15" height="14" viewBox="0 0 15 14"><path d="M1.5 12.5v-5l6-6l6 6v5z" fill="#fff" stroke="#777" stroke-width="1"/></svg>
<div class="r" style="left:5px;top:252px;width:22px;height:653px;background:#fff;"></div>
<div class="r" style="left:5px;top:252px;width:22px;height:15px;background:#c6c6c6;"></div>
<div class="r" style="left:17px;top:251px;width:3px;height:1px;background:#666;"></div>
<div class="r" style="left:17px;top:280px;width:3px;height:1px;background:#666;"></div>
<div class="r" style="left:14.5px;top:294px;width:7px;height:1px;background:#666;"></div>
<div class="r" style="left:17px;top:308px;width:3px;height:1px;background:#666;"></div>
<div class="t" style="left:-3px;top:302.4px;width:40px;height:40px;transform-origin:50% 50%;transform:rotate(-90deg);text-align:center;font-size:14.9px;line-height:40px;color:#555">1</div>
<div class="r" style="left:17px;top:337px;width:3px;height:1px;background:#666;"></div>
<div class="r" style="left:14.5px;top:351px;width:7px;height:1px;background:#666;"></div>
<div class="r" style="left:17px;top:365px;width:3px;height:1px;background:#666;"></div>
<div class="t" style="left:-3px;top:359.2px;width:40px;height:40px;transform-origin:50% 50%;transform:rotate(-90deg);text-align:center;font-size:14.9px;line-height:40px;color:#555">2</div>
<div class="r" style="left:17px;top:393px;width:3px;height:1px;background:#666;"></div>
<div class="r" style="left:14.5px;top:408px;width:7px;height:1px;background:#666;"></div>
<div class="r" style="left:17px;top:422px;width:3px;height:1px;background:#666;"></div>
<div class="t" style="left:-3px;top:415.9px;width:40px;height:40px;transform-origin:50% 50%;transform:rotate(-90deg);text-align:center;font-size:14.9px;line-height:40px;color:#555">3</div>
<div class="r" style="left:17px;top:450px;width:3px;height:1px;background:#666;"></div>
<div class="r" style="left:14.5px;top:464px;width:7px;height:1px;background:#666;"></div>
<div class="r" style="left:17px;top:479px;width:3px;height:1px;background:#666;"></div>
<div class="t" style="left:-3px;top:472.7px;width:40px;height:40px;transform-origin:50% 50%;transform:rotate(-90deg);text-align:center;font-size:14.9px;line-height:40px;color:#555">4</div>
<div class="r" style="left:17px;top:507px;width:3px;height:1px;background:#666;"></div>
<div class="r" style="left:14.5px;top:521px;width:7px;height:1px;background:#666;"></div>
<div class="r" style="left:17px;top:535px;width:3px;height:1px;background:#666;"></div>
<div class="t" style="left:-3px;top:529.5px;width:40px;height:40px;transform-origin:50% 50%;transform:rotate(-90deg);text-align:center;font-size:14.9px;line-height:40px;color:#555">5</div>
<div class="r" style="left:17px;top:564px;width:3px;height:1px;background:#666;"></div>
<div class="r" style="left:14.5px;top:578px;width:7px;height:1px;background:#666;"></div>
<div class="r" style="left:17px;top:592px;width:3px;height:1px;background:#666;"></div>
<div class="t" style="left:-3px;top:586.3px;width:40px;height:40px;transform-origin:50% 50%;transform:rotate(-90deg);text-align:center;font-size:14.9px;line-height:40px;color:#555">6</div>
<div class="r" style="left:17px;top:620px;width:3px;height:1px;background:#666;"></div>
<div class="r" style="left:14.5px;top:635px;width:7px;height:1px;background:#666;"></div>
<div class="r" style="left:17px;top:649px;width:3px;height:1px;background:#666;"></div>
<div class="t" style="left:-3px;top:643.1px;width:40px;height:40px;transform-origin:50% 50%;transform:rotate(-90deg);text-align:center;font-size:14.9px;line-height:40px;color:#555">7</div>
<div class="r" style="left:17px;top:677px;width:3px;height:1px;background:#666;"></div>
<div class="r" style="left:14.5px;top:691px;width:7px;height:1px;background:#666;"></div>
<div class="r" style="left:17px;top:706px;width:3px;height:1px;background:#666;"></div>
<div class="t" style="left:-3px;top:699.8px;width:40px;height:40px;transform-origin:50% 50%;transform:rotate(-90deg);text-align:center;font-size:14.9px;line-height:40px;color:#555">8</div>
<div class="r" style="left:17px;top:734px;width:3px;height:1px;background:#666;"></div>
<div class="r" style="left:14.5px;top:748px;width:7px;height:1px;background:#666;"></div>
<div class="r" style="left:17px;top:762px;width:3px;height:1px;background:#666;"></div>
<div class="t" style="left:-3px;top:756.6px;width:40px;height:40px;transform-origin:50% 50%;transform:rotate(-90deg);text-align:center;font-size:14.9px;line-height:40px;color:#555">9</div>
<div class="r" style="left:17px;top:791px;width:3px;height:1px;background:#666;"></div>
<div class="r" style="left:14.5px;top:805px;width:7px;height:1px;background:#666;"></div>
<div class="r" style="left:17px;top:819px;width:3px;height:1px;background:#666;"></div>
<div class="t" style="left:-3px;top:813.4px;width:40px;height:40px;transform-origin:50% 50%;transform:rotate(-90deg);text-align:center;font-size:14.9px;line-height:40px;color:#555">10</div>
<div class="r" style="left:17px;top:848px;width:3px;height:1px;background:#666;"></div>
<div class="r" style="left:14.5px;top:862px;width:7px;height:1px;background:#666;"></div>
<div class="r" style="left:17px;top:876px;width:3px;height:1px;background:#666;"></div>
<div class="t" style="left:-3px;top:870.2px;width:40px;height:40px;transform-origin:50% 50%;transform:rotate(-90deg);text-align:center;font-size:14.9px;line-height:40px;color:#555">11</div>
<div class="r" style="left:65px;top:252px;width:1px;height:653px;background:#d2d2d2;"></div>
<div class="r" style="left:66px;top:252px;width:1188px;height:653px;background:#fff;"></div>
<div class="t" style="left:207.20px;top:271.10px;font-size:20.29px;line-height:20.29px;color:#000;font-weight:normal;font-style:normal;transform:scaleX(1.0511);">Artikel</div>
<div class="t" style="left:363.37px;top:271.10px;font-size:20.29px;line-height:20.29px;color:#000;font-weight:normal;font-style:normal;transform:scaleX(0.9482);">Farbe</div>
<div class="t" style="left:604.37px;top:271.10px;font-size:20.29px;line-height:20.29px;color:#000;font-weight:normal;font-style:normal;transform:scaleX(0.9353);">Preis</div>
<div class="t" style="left:647.80px;top:271.10px;font-size:20.29px;line-height:20.29px;color:#000;font-weight:normal;font-style:normal;transform:scaleX(1.1895);">¶</div>
<div class="t" style="left:206.76px;top:315.80px;font-size:20.29px;line-height:20.29px;color:#000;font-weight:normal;font-style:normal;transform:scaleX(0.9011);">Sessel</div>
<div class="t" style="left:348.75px;top:315.80px;font-size:20.29px;line-height:20.29px;color:#000;font-weight:normal;font-style:normal;transform:scaleX(1.0139);">blau</div>
<div class="t" style="left:590.04px;top:315.80px;font-size:20.29px;line-height:20.29px;color:#000;font-weight:normal;font-style:normal;transform:scaleX(0.9761);">12,7</div>
<div class="r" style="left:629px;top:312px;width:18px;height:29px;background:#c8c8c8;"></div>
<svg class="r" style="left:631px;top:321px;" width="13" height="11" viewBox="0 0 13 11"><path d="M10.5 1v5.5H2.5 M5 3.5L2 6.5L5 9.5" fill="none" stroke="#000" stroke-width="1.3"/></svg>
<div class="t" style="left:207.80px;top:344.90px;font-size:20.29px;line-height:20.29px;color:#000;font-weight:normal;font-style:normal;transform:scaleX(0.9221);">Tisch</div>
<div class="t" style="left:349.80px;top:344.90px;font-size:20.29px;line-height:20.29px;color:#000;font-weight:normal;font-style:normal;transform:scaleX(1.0130);">veilchenrot</div>
<div class="t" style="left:590.08px;top:344.90px;font-size:20.29px;line-height:20.29px;color:#000;font-weight:normal;font-style:normal;transform:scaleX(0.9801);">234,89</div>
<div class="t" style="left:650.86px;top:344.90px;font-size:20.29px;line-height:20.29px;color:#000;font-weight:normal;font-style:normal;transform:scaleX(1.0819);">¶</div>
<svg class="r" style="left:308px;top:278.5px;" width="11" height="8" viewBox="0 0 11 8"><path d="M0.5 4h8" stroke="#000" stroke-width="1.5"/><path d="M6 1.2 L10 4 L6 6.8z" fill="#000"/></svg>
<svg class="r" style="left:503.3px;top:278.4px;" width="11" height="8" viewBox="0 0 11 8"><path d="M0.5 4h8" stroke="#000" stroke-width="1.5"/><path d="M6 1.2 L10 4 L6 6.8z" fill="#000"/></svg>
<svg class="r" style="left:299px;top:323.2px;" width="11" height="8" viewBox="0 0 11 8"><path d="M0.5 4h8" stroke="#000" stroke-width="1.5"/><path d="M6 1.2 L10 4 L6 6.8z" fill="#000"/></svg>
<svg class="r" style="left:483px;top:323px;" width="11" height="8" viewBox="0 0 11 8"><path d="M0.5 4h8" stroke="#000" stroke-width="1.5"/><path d="M6 1.2 L10 4 L6 6.8z" fill="#000"/></svg>
<svg class="r" style="left:294px;top:352.2px;" width="11" height="8" viewBox="0 0 11 8"><path d="M0.5 4h8" stroke="#000" stroke-width="1.5"/><path d="M6 1.2 L10 4 L6 6.8z" fill="#000"/></svg>
<svg class="r" style="left:514px;top:352.1px;" width="11" height="8" viewBox="0 0 11 8"><path d="M0.5 4h8" stroke="#000" stroke-width="1.5"/><path d="M6 1.2 L10 4 L6 6.8z" fill="#000"/></svg>
<div class="t" style="left:7.58px;top:940.80px;font-size:14.93px;line-height:14.93px;color:#555;font-weight:normal;font-style:normal;transform:scaleX(1.0194);">Seite 1 von 1</div>
<div class="t" style="left:117.73px;top:940.80px;font-size:14.93px;line-height:14.93px;color:#555;font-weight:normal;font-style:normal;transform:scaleX(1.0818);">9 Wörter</div>
<svg class="r" style="left:196px;top:935px;" width="28" height="22" viewBox="0 0 28 22"><path d="M3.5 5V18.3H12.5V5" fill="none" stroke="#666" stroke-width="1.1"/><path d="M12.5 18.3H21.8V13" fill="none" stroke="#666" stroke-width="1.1"/><path d="M11 18.5 L12.5 20.2 L14 18.5" fill="none" stroke="#666" stroke-width="1"/><path d="M15.8 14.6 L22.2 7 L24.6 9.2 L18.2 16.8 Z" fill="#666"/><path d="M15.2 15.4 L17.6 17.5 L14.8 18.3 Z" fill="#666"/></svg>
<div class="t" style="left:237.99px;top:940.80px;font-size:14.93px;line-height:14.93px;color:#555;font-weight:normal;font-style:normal;transform:scaleX(1.0314);">Deutsch (Österreich)</div>
<svg class="r" style="left:900px;top:936px;" width="24" height="22" viewBox="0 0 24 22"><path d="M2.7 2.7H20.3V18.2H2.7Z" fill="none" stroke="#666" stroke-width="1.2"/><path d="M11.5 2.7V20" stroke="#666" stroke-width="1.2"/><path d="M4.8 5.5H10M4.8 8.5H10M4.8 11.5H10M4.8 14.5H10M13 5.5H18.2M13 8.5H18.2M13 11.5H18.2M13 14.5H18.2" stroke="#666" stroke-width="1"/><path d="M9.8 17.5 L11.5 20 L13.2 17.5" fill="none" stroke="#666" stroke-width="1"/></svg>
<div class="r" style="left:934px;top:932px;width:45px;height:26px;background:#c8c8c8;"></div>
<svg class="r" style="left:945px;top:936px;" width="24" height="22" viewBox="0 0 24 22"><path d="M2.9 2.7H20.5V19H2.9Z" fill="none" stroke="#555" stroke-width="1.3"/><path d="M6 6.5H17.5M6 9.5H17.5M6 12.5H17.5M6 15.5H17.5" stroke="#555" stroke-width="1.1"/></svg>
<svg class="r" style="left:990px;top:936px;" width="26" height="22" viewBox="0 0 26 22"><path d="M13 18H2.5V2.5H18.5V11" fill="none" stroke="#666" stroke-width="1.2"/><path d="M5 5.5H15.5M5 8.5H12.5M5 11.5H12M5 14.5H9.5" stroke="#666" stroke-width="1"/><circle cx="16" cy="14.7" r="6" fill="#666"/><path d="M12.5 12.5 C14 11 16 12 15.5 14 C15 16 17 17 18.5 15.5 M17.5 9.5 C17 11 18.5 12 20.5 12" fill="none" stroke="#e0e0e0" stroke-width="1.1"/></svg>
<div class="r" style="left:1030px;top:946px;width:11px;height:2px;background:#555;"></div>
<div class="r" style="left:1046px;top:946px;width:150px;height:1px;background:#999;"></div>
<div class="r" style="left:1118px;top:939px;width:6.5px;height:16px;background:#666;"></div>
<div class="r" style="left:1201px;top:945px;width:14px;height:2.5px;background:#555;"></div>
<div class="r" style="left:1206.75px;top:939px;width:2.5px;height:14px;background:#555;"></div>
<div class="t" style="left:1231.46px;top:940.80px;font-size:14.93px;line-height:14.93px;color:#555;font-weight:normal;font-style:normal;transform:scaleX(1.0491);">100%</div>
<div class="r" style="left:194px;top:384px;width:458px;height:557px;box-sizing:border-box;border:1px solid #3d6f9e;background:#f0f0f0;box-shadow:0 0 14px rgba(0,0,0,0.22)"></div>
<div class="r" style="left:195px;top:385px;width:456px;height:44px;background:#fff;"></div>
<div class="t" style="left:206.90px;top:399.00px;font-size:18.84px;line-height:18.84px;color:#000;font-weight:normal;font-style:normal;transform:scaleX(0.9454);">Tabstopps</div>
<div class="t" style="left:542.00px;top:397.00px;font-size:21.30px;line-height:21.30px;color:#000;font-weight:normal;font-style:normal;transform:scaleX(0.7294);">?</div>
<svg class="r" style="left:607px;top:397px;" width="19" height="19" viewBox="0 0 19 19"><path d="M2 2 L17 17 M17 2 L2 17" stroke="#111" stroke-width="1.2"/></svg>
<div class="t" style="left:205.00px;top:443.90px;font-size:15.94px;line-height:15.94px;color:#000;font-weight:normal;font-style:normal;">Tabstoppposition:</div>
<div class="r" style="left:205px;top:458px;width:8px;height:1px;background:#000;"></div>
<div class="t" style="left:470.38px;top:443.60px;font-size:15.94px;line-height:15.94px;color:#000;font-weight:normal;font-style:normal;transform:scaleX(0.9825);">Standardtabstopps:</div>
<div class="r" style="left:471.4px;top:458px;width:8.600000000000023px;height:1px;background:#000;"></div>
<div class="r" style="left:205px;top:466px;width:251px;height:32px;background:#fff;box-sizing:border-box;border:1px solid #a9a9a9;"></div>
<div class="r" style="left:208px;top:469px;width:46px;height:21px;background:#99c4ec;"></div>
<div class="t" style="left:207.67px;top:473.20px;font-size:15.94px;line-height:15.94px;color:#000;font-weight:normal;font-style:normal;transform:scaleX(0.9540);">2,5 cm</div>
<div class="r" style="left:205px;top:498px;width:251px;height:130px;background:#fff;box-sizing:border-box;border:1px solid #828282;"></div>
<div class="r" style="left:429px;top:499px;width:26px;height:128px;background:#f0f0f0;"></div>
<svg class="r" style="left:434px;top:508px;" width="16" height="12" viewBox="0 0 16 12"><path d="M2.5 9 L8 3.5 L13.5 9" fill="none" stroke="#c4c4c4" stroke-width="2"/></svg>
<svg class="r" style="left:434px;top:606px;" width="16" height="12" viewBox="0 0 16 12"><path d="M2.5 3 L8 8.5 L13.5 3" fill="none" stroke="#c4c4c4" stroke-width="2"/></svg>
<div class="t" style="left:209.76px;top:504.20px;font-size:15.94px;line-height:15.94px;color:#000;font-weight:normal;font-style:normal;transform:scaleX(0.9713);">2,5 cm</div>
<div class="t" style="left:209.77px;top:524.90px;font-size:15.94px;line-height:15.94px;color:#000;font-weight:normal;font-style:normal;transform:scaleX(0.9671);">6,75 cm</div>
<div class="r" style="left:471px;top:466px;width:170px;height:32px;background:#fff;box-sizing:border-box;border:1px solid #b4b4b4;"></div>
<div class="r" style="left:615px;top:468px;width:24px;height:14px;background:#e6e6e6;box-sizing:border-box;border:1px solid #c4c4c4;"></div>
<div class="r" style="left:615px;top:482px;width:24px;height:14px;background:#e6e6e6;box-sizing:border-box;border:1px solid #c4c4c4;"></div>
<svg class="r" style="left:621px;top:470px;" width="12" height="7" viewBox="0 0 12 7"><path d="M1 6h10l-5-5z" fill="#000"/></svg>
<svg class="r" style="left:621px;top:485px;" width="12" height="7" viewBox="0 0 12 7"><path d="M1 1h10l-5 5z" fill="#000"/></svg>
<div class="t" style="left:474.95px;top:472.60px;font-size:15.94px;line-height:15.94px;color:#000;font-weight:normal;font-style:normal;transform:scaleX(0.9647);">1,25 cm</div>
<div class="t" style="left:471.40px;top:519.60px;font-size:15.94px;line-height:15.94px;color:#000;font-weight:normal;font-style:normal;transform:scaleX(0.9676);">Zu löschende Tabstopps:</div>
<div class="t" style="left:205.90px;top:637.30px;font-size:15.94px;line-height:15.94px;color:#000;font-weight:normal;font-style:normal;transform:scaleX(0.9883);">Ausrichtung</div>
<div class="r" style="left:295px;top:643px;width:345px;height:1px;background:#d9d9d9;"></div>
<div class="t" style="left:204.88px;top:739.10px;font-size:15.94px;line-height:15.94px;color:#000;font-weight:normal;font-style:normal;transform:scaleX(0.9502);">Füllzeichen</div>
<div class="r" style="left:287px;top:745px;width:353px;height:1px;background:#d9d9d9;"></div>
<svg class="r" style="left:219px;top:666px;" width="22" height="22" viewBox="0 0 22 22"><circle cx="11" cy="11" r="9.6" fill="#fff" stroke="#333" stroke-width="1.1"/><circle cx="11" cy="11" r="5" fill="#333"/></svg>
<svg class="r" style="left:365px;top:666px;" width="22" height="22" viewBox="0 0 22 22"><circle cx="11" cy="11" r="9.6" fill="#fff" stroke="#333" stroke-width="1.1"/></svg>
<svg class="r" style="left:510px;top:666px;" width="22" height="22" viewBox="0 0 22 22"><circle cx="11" cy="11" r="9.6" fill="#fff" stroke="#333" stroke-width="1.1"/></svg>
<svg class="r" style="left:219px;top:697px;" width="22" height="22" viewBox="0 0 22 22"><circle cx="11" cy="11" r="9.6" fill="#fff" stroke="#333" stroke-width="1.1"/></svg>
<svg class="r" style="left:365px;top:697px;" width="22" height="22" viewBox="0 0 22 22"><circle cx="11" cy="11" r="9.6" fill="#fff" stroke="#333" stroke-width="1.1"/></svg>
<svg class="r" style="left:219px;top:768px;" width="22" height="22" viewBox="0 0 22 22"><circle cx="11" cy="11" r="9.6" fill="#fff" stroke="#333" stroke-width="1.1"/><circle cx="11" cy="11" r="5" fill="#333"/></svg>
<svg class="r" style="left:365px;top:768px;" width="22" height="22" viewBox="0 0 22 22"><circle cx="11" cy="11" r="9.6" fill="#fff" stroke="#333" stroke-width="1.1"/></svg>
<svg class="r" style="left:510px;top:768px;" width="22" height="22" viewBox="0 0 22 22"><circle cx="11" cy="11" r="9.6" fill="#fff" stroke="#333" stroke-width="1.1"/></svg>
<svg class="r" style="left:219px;top:799px;" width="22" height="22" viewBox="0 0 22 22"><circle cx="11" cy="11" r="9.6" fill="#fff" stroke="#333" stroke-width="1.1"/></svg>
<div class="t" style="left:245.07px;top:671.30px;font-size:15.94px;line-height:15.94px;color:#000;font-weight:normal;font-style:normal;transform:scaleX(0.9738);">Links</div>
<div class="r" style="left:246px;top:685px;width:8px;height:1px;background:#000;"></div>
<div class="t" style="left:392.30px;top:671.30px;font-size:15.94px;line-height:15.94px;color:#000;font-weight:normal;font-style:normal;transform:scaleX(1.0110);">Zentriert</div>
<div class="r" style="left:392px;top:685px;width:9px;height:1px;background:#000;"></div>
<div class="t" style="left:536.18px;top:671.30px;font-size:15.94px;line-height:15.94px;color:#000;font-weight:normal;font-style:normal;transform:scaleX(0.9318);">Rechts</div>
<div class="r" style="left:537px;top:685px;width:9px;height:1px;background:#000;"></div>
<div class="t" style="left:245.07px;top:702.20px;font-size:15.94px;line-height:15.94px;color:#000;font-weight:normal;font-style:normal;transform:scaleX(0.9870);">Dezimal</div>
<div class="r" style="left:246px;top:716px;width:9px;height:1px;background:#000;"></div>
<div class="t" style="left:392.30px;top:702.20px;font-size:15.94px;line-height:15.94px;color:#000;font-weight:normal;font-style:normal;transform:scaleX(0.9874);">Vertikale Linie</div>
<div class="r" style="left:392px;top:716px;width:9px;height:1px;background:#000;"></div>
<div class="t" style="left:245.07px;top:773.20px;font-size:15.94px;line-height:15.94px;color:#000;font-weight:normal;font-style:normal;">1 Ohne</div>
<div class="r" style="left:246px;top:787px;width:8px;height:1px;background:#000;"></div>
<div class="t" style="left:391.02px;top:773.20px;font-size:15.94px;line-height:15.94px;color:#000;font-weight:normal;font-style:normal;transform:scaleX(1.1148);">2</div>
<div class="r" style="left:392px;top:787px;width:9px;height:1px;background:#000;"></div>
<svg class="r" style="left:404px;top:783px;" width="23" height="4" viewBox="0 0 23 4"><rect x="0.5" y="1.5" width="1.6" height="1.8" fill="#222"/><rect x="3.6" y="1.5" width="1.6" height="1.8" fill="#222"/><rect x="6.7" y="1.5" width="1.6" height="1.8" fill="#222"/><rect x="9.8" y="1.5" width="1.6" height="1.8" fill="#222"/><rect x="12.9" y="1.5" width="1.6" height="1.8" fill="#222"/><rect x="16.0" y="1.5" width="1.6" height="1.8" fill="#222"/><rect x="19.1" y="1.5" width="1.6" height="1.8" fill="#222"/></svg>
<div class="t" style="left:535.90px;top:773.20px;font-size:15.94px;line-height:15.94px;color:#000;font-weight:normal;font-style:normal;transform:scaleX(1.1440);">3</div>
<div class="r" style="left:537px;top:787px;width:9px;height:1px;background:#000;"></div>
<svg class="r" style="left:550px;top:781px;" width="43" height="3" viewBox="0 0 43 3"><rect x="1" y="0.5" width="4" height="1.2" fill="#222"/><rect x="7" y="0.5" width="4" height="1.2" fill="#222"/><rect x="13" y="0.5" width="4" height="1.2" fill="#222"/><rect x="19" y="0.5" width="4" height="1.2" fill="#222"/><rect x="25" y="0.5" width="4" height="1.2" fill="#222"/><rect x="31" y="0.5" width="4" height="1.2" fill="#222"/><rect x="37" y="0.5" width="4" height="1.2" fill="#222"/></svg>
<div class="t" style="left:246.10px;top:804.20px;font-size:15.94px;line-height:15.94px;color:#000;font-weight:normal;font-style:normal;transform:scaleX(0.8826);">4</div>
<div class="r" style="left:246px;top:818px;width:8px;height:1px;background:#000;"></div>
<div class="r" style="left:259.7px;top:817.5px;width:26.7px;height:1.2px;background:#222;"></div>
<div class="r" style="left:236px;top:837px;width:124px;height:36px;background:#e1e1e1;box-sizing:border-box;border:1px solid #adadad;"></div>
<div class="t" style="left:266.77px;top:848.00px;font-size:15.94px;line-height:15.94px;color:#000;font-weight:normal;font-style:normal;transform:scaleX(0.9490);">Festlegen</div>
<div class="r" style="left:276.5px;top:862.5px;width:7.0px;height:1px;background:#000;"></div>
<div class="r" style="left:376px;top:837px;width:124px;height:36px;background:#e1e1e1;box-sizing:border-box;border:1px solid #adadad;"></div>
<div class="t" style="left:408.87px;top:848.00px;font-size:15.94px;line-height:15.94px;color:#000;font-weight:normal;font-style:normal;transform:scaleX(0.9566);">Löschen</div>
<div class="r" style="left:458px;top:862.5px;width:7.699999999999989px;height:1px;background:#000;"></div>
<div class="r" style="left:516px;top:837px;width:124px;height:36px;background:#e1e1e1;box-sizing:border-box;border:1px solid #adadad;"></div>
<div class="t" style="left:536.40px;top:848.00px;font-size:15.94px;line-height:15.94px;color:#000;font-weight:normal;font-style:normal;transform:scaleX(0.9728);">Alle löschen</div>
<div class="r" style="left:536.4px;top:862.5px;width:9.100000000000023px;height:1px;background:#000;"></div>
<div class="r" style="left:376px;top:892px;width:124px;height:36px;background:#e1e1e1;box-sizing:border-box;border:2px solid #0078d7;"></div>
<div class="t" style="left:426.16px;top:902.70px;font-size:15.94px;line-height:15.94px;color:#000;font-weight:normal;font-style:normal;transform:scaleX(0.9390);">OK</div>
<div class="r" style="left:516px;top:892px;width:124px;height:36px;background:#e1e1e1;box-sizing:border-box;border:1px solid #adadad;"></div>
<div class="t" style="left:540.40px;top:902.70px;font-size:15.94px;line-height:15.94px;color:#000;font-weight:normal;font-style:normal;transform:scaleX(0.9648);">Abbrechen</div>
</body></html>
